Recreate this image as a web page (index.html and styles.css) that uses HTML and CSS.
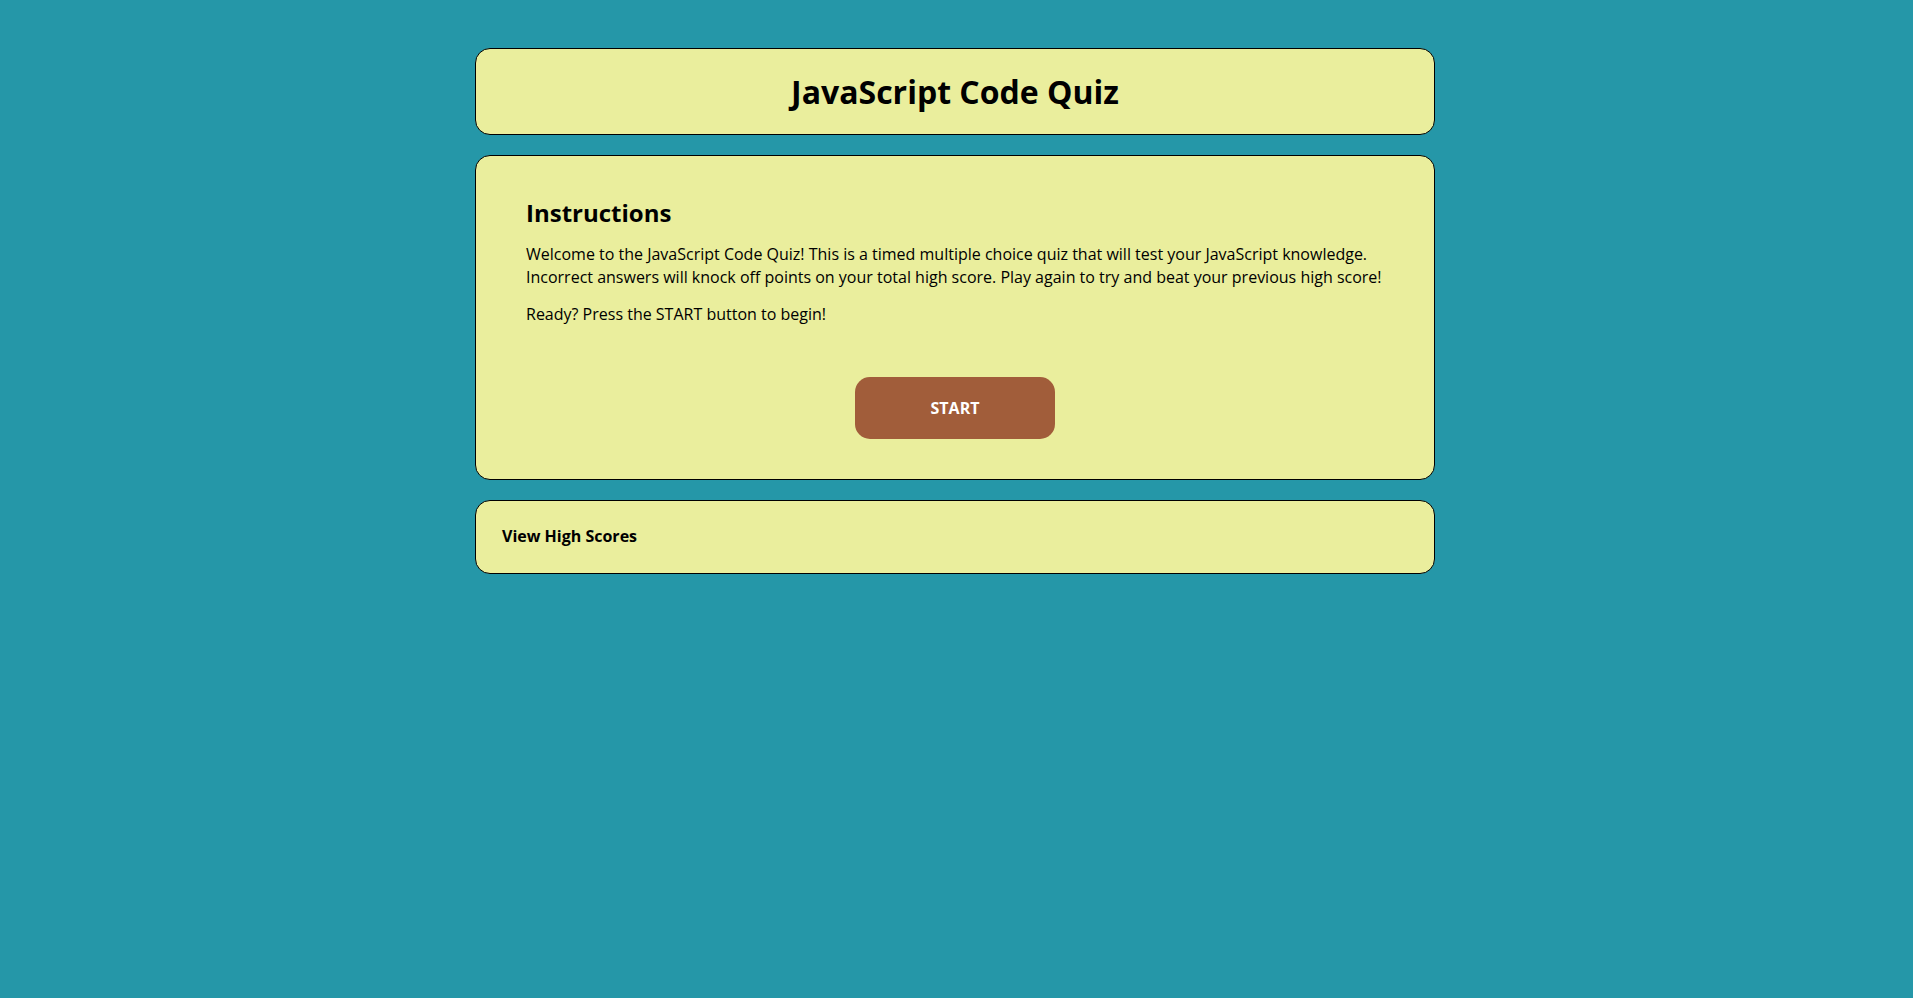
FILE: index.html
```html
<!DOCTYPE html>
<html lang="en">
<head>
<meta charset="UTF-8">
<meta name="viewport" content="width=device-width, initial-scale=1.0">
<title>JavaScript Code Quiz</title>
<link rel="stylesheet" href="styles.css">
</head>
<body>
  <div class="quiz">
    <header class="card quiz-header">
      <h1>JavaScript Code Quiz</h1>
    </header>

    <section id="intro" class="card intro">
      <h2>Instructions</h2>
      <p>Welcome to the JavaScript Code Quiz! This is a timed multiple choice quiz that will test your JavaScript knowledge. Incorrect answers will knock off points on your total high score. Play again to try and beat your previous high score!</p>
      <p>Ready? Press the START button to begin!</p>
      <div class="start-row">
        <button id="start-btn" class="start-btn">START</button>
      </div>
    </section>

    <footer class="card scores-link">
      <a href="#" id="view-scores">View High Scores</a>
    </footer>
  </div>
</body>
</html>
```

FILE: styles.css
```css
body {
  font-family: 'Open Sans', sans-serif;
  font-size: 16px;
  margin: 0;
  padding: 0 3px 0 0;
  background-color: #2597a8;
  color: #000;
}

.quiz {
  width: 960px;
  margin: 48px auto;
  display: flex;
  flex-direction: column;
  gap: 20px;
}

.card {
  background: #eaee9d;
  border: 1px solid #000;
  border-radius: 15px;
}

.quiz-header {
  padding: 21px 0 20px;
  text-align: center;
}

.quiz-header h1 {
  margin: 0;
  font-size: 32px;
  line-height: 44px;
  font-weight: 700;
}

.intro {
  padding: 40px 50px 40px;
}

.intro h2 {
  margin: 0 0 14px;
  font-size: 24px;
  font-weight: 700;
}

.intro p {
  margin: 0 0 14px;
  line-height: 23px;
}

.start-row {
  display: flex;
  justify-content: center;
  margin-top: 51px;
}

.start-btn {
  width: 200px;
  height: 62px;
  background-color: #a15d3a;
  color: #fff;
  border: none;
  border-radius: 15px;
  font-family: inherit;
  font-size: 16px;
  font-weight: 700;
  cursor: pointer;
}

.scores-link {
  padding: 24px 26px 25px;
  line-height: 23px;
}

.scores-link a {
  color: #000;
  font-weight: 700;
  text-decoration: none;
}
```
